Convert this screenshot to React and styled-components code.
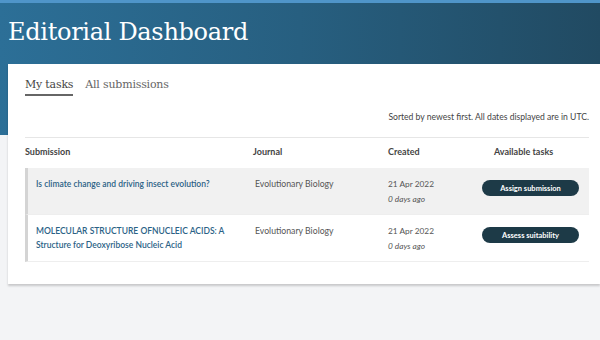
import React from 'react';
import styled, { createGlobalStyle } from 'styled-components';

const Global = createGlobalStyle`
  html, body { margin: 0; padding: 0; background: #f3f4f6; }
  body { font-family: Lato, "Liberation Sans", sans-serif; }
`;

const rows = [
  {
    id: 1,
    title: 'Is climate change and driving insect evolution?',
    journal: 'Evolutionary Biology',
    date: '21 Apr 2022',
    ago: '0 days ago',
    task: 'Assign submission',
    shade: true,
  },
  {
    id: 2,
    title: 'MOLECULAR STRUCTURE OFNUCLEIC ACIDS: A Structure for Deoxyribose Nucleic Acid',
    journal: 'Evolutionary Biology',
    date: '21 Apr 2022',
    ago: '0 days ago',
    task: 'Assess suitability',
    shade: false,
  },
];

const App = () => {
  return (
    <Page>
      <Global />
      <Hero>
        <h1>Editorial Dashboard</h1>
      </Hero>
      <Card>
        <Tabs>
          <Tab active>My tasks</Tab>
          <Tab>All submissions</Tab>
        </Tabs>
        <Note>Sorted by newest first. All dates displayed are in UTC.</Note>
        <Table>
          <HeadRow>
            <div>Submission</div>
            <div>Journal</div>
            <div>Created</div>
            <div className="tasks">Available tasks</div>
          </HeadRow>
          {rows.map((r) => (
            <Row key={r.id} shade={r.shade}>
              <Title href="#">{r.title}</Title>
              <Journal>{r.journal}</Journal>
              <Created>
                <span>{r.date}</span>
                <em>{r.ago}</em>
              </Created>
              <TaskCell>
                <TaskButton>{r.task}</TaskButton>
              </TaskCell>
            </Row>
          ))}
        </Table>
      </Card>
    </Page>
  );
};

const Page = styled.div`
  width: 600px;
  height: 340px;
  overflow: hidden;
`;

const Hero = styled.div`
  height: 135px;
  border-top: 3px solid #4f95c9;
  box-sizing: border-box;
  background: linear-gradient(90deg, #2c6f97 0%, #275f80 50%, #214a62 100%);
  padding: 11px 0 0 8px;
  h1 {
    margin: 0;
    font-family: "DejaVu Serif", "Liberation Serif", serif;
    font-weight: normal;
    font-size: 24px;
    letter-spacing: -0.3px;
    color: #ffffff;
    line-height: 36px;
  }
`;

const Card = styled.div`
  position: relative;
  margin: -71px 0 0 8px;
  background: #ffffff;
  padding: 13px 11px 22px 17px;
  box-shadow: 0 2px 2px rgba(0, 0, 0, 0.18);
`;

const Tabs = styled.div`
  display: flex;
  gap: 12px;
`;

const Tab = styled.div`
  font-family: "DejaVu Serif", "Liberation Serif", serif;
  font-size: 11px;
  letter-spacing: -0.2px;
  color: ${(p) => (p.active ? '#444' : '#666')};
  padding: 1px 0 3px;
  border-bottom: 2px solid ${(p) => (p.active ? '#666' : 'transparent')};
`;

const Note = styled.div`
  text-align: right;
  font-size: 8.6px;
  color: #444;
  margin-top: 16px;
  padding-bottom: 15px;
  border-bottom: 1px solid #e6e6e6;
`;

const Table = styled.div`
  display: flex;
  flex-direction: column;
`;

const cols = `228px 135px 96px 1fr`;

const HeadRow = styled.div`
  display: grid;
  grid-template-columns: ${cols};
  font-size: 9px;
  font-weight: bold;
  color: #444;
  padding: 8px 0 11px;
  .tasks { padding-left: 10px; }
`;

const Row = styled.div`
  display: grid;
  grid-template-columns: ${cols};
  align-items: start;
  height: 47px;
  box-sizing: border-box;
  padding: 9px 0 0 0;
  background: ${(p) => (p.shade ? '#f1f1f1' : '#ffffff')};
  border-left: 3px solid #d4d4d4;
  border-bottom: 1px solid #eeeeee;
`;

const Title = styled.a`
  color: #2b6286;
  font-size: 8.5px;
  font-weight: 600;
  line-height: 14px;
  text-decoration: none;
  padding: 0 8px 0 8px;
`;

const Journal = styled.div`
  font-size: 8.7px;
  color: #555;
  line-height: 14px;
  margin-left: -1px;
`;

const Created = styled.div`
  display: flex;
  flex-direction: column;
  font-size: 8.3px;
  color: #555;
  line-height: 15px;
  margin-left: -3px;
  em { font-style: italic; }
`;

const TaskCell = styled.div`
  display: flex;
  justify-content: flex-start;
  padding-top: 3px;
  margin-left: -5px;
`;

const TaskButton = styled.button`
  width: 97px;
  height: 16px;
  border: none;
  border-radius: 8px;
  background: #1d3a47;
  color: #ffffff;
  font-family: Lato, "Liberation Sans", sans-serif;
  font-size: 7.5px;
  font-weight: bold;
  padding: 0;
  cursor: pointer;
`;

export default App;
